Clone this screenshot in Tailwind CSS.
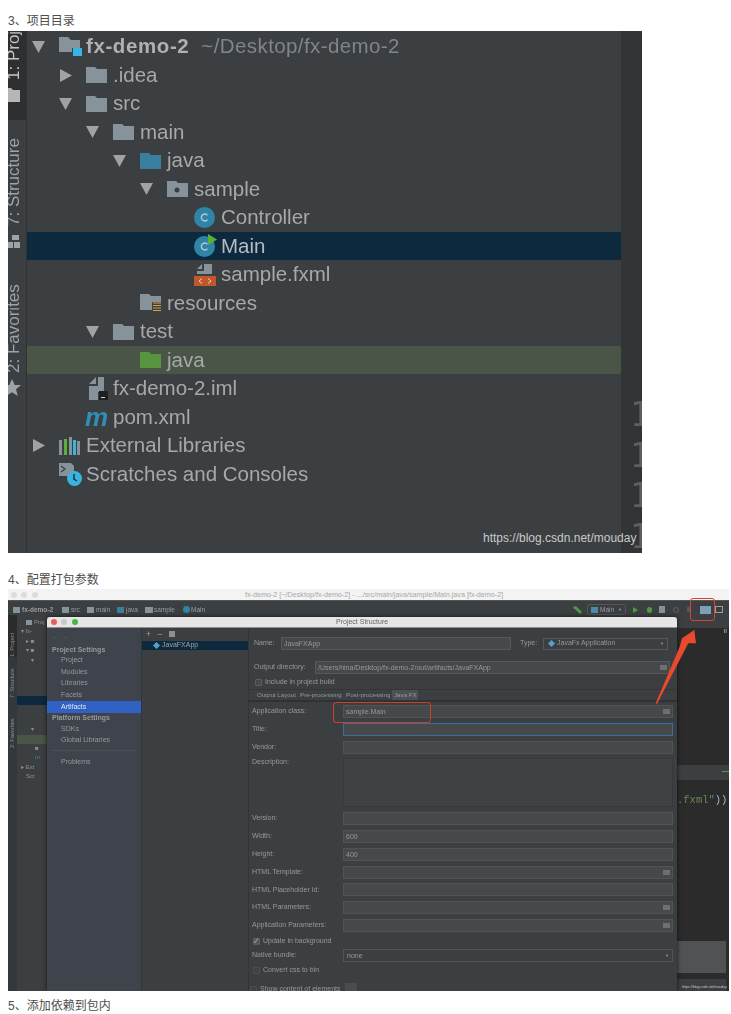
<!DOCTYPE html>
<html lang="zh">
<head>
  <meta charset="UTF-8">
  <title>项目目录</title>
  <script src="https://cdn.jsdelivr.net/npm/@tailwindcss/browser@4"></script>
</head>
<body class="bg-white font-['Liberation_Sans','Noto_Sans_CJK_SC',sans-serif] overflow-hidden h-[1014px]">
  <p class="pl-2 pt-[14px] h-[31px] text-[12px] leading-[14px] text-[#4d4d4d]">3、项目目录</p>

  <!-- project tree screenshot -->
  <div class="relative ml-2 w-[634px] h-[522px] bg-[#3c3f41] overflow-hidden flex">
    <div class="w-[19px] h-full border-r border-[#2f3133] shrink-0 relative text-[#a0a3a5] blur-[0.4px]">
      <div class="h-[89px] bg-[#2d2f30]"></div>
      <span class="absolute left-0 top-[-2px] w-[12px] h-[51px] [writing-mode:vertical-rl] rotate-180 text-[17px] leading-[12px] text-[#c4c6c7] whitespace-nowrap">1: Proj</span>
      <svg class="absolute left-0 top-[57px]" width="12" height="14" viewBox="0 0 12 14"><path d="M0 0h3l2 2h7v12H0z" fill="#b4b6b7"/></svg>
      <span class="absolute left-0 top-[105px] w-[12px] h-[90px] [writing-mode:vertical-rl] rotate-180 text-[17px] leading-[12px] whitespace-nowrap">7: Structure</span>
      <svg class="absolute left-0 top-[204px]" width="12" height="14" viewBox="0 0 12 14" fill="#a0a3a5"><rect x="4" y="0" width="7" height="5"/><rect x="0" y="7" width="5" height="6"/><rect x="6" y="7" width="6" height="6"/></svg>
      <span class="absolute left-0 top-[252px] w-[12px] h-[90px] [writing-mode:vertical-rl] rotate-180 text-[17px] leading-[12px] whitespace-nowrap">2: Favorites</span>
      <svg class="absolute left-[-6px] top-[347px]" width="20" height="20" viewBox="0 0 20 20"><path d="M10 1l2.700 6h6.300l-5 4.300 1.800 6.700-5.800-3.700-5.800 3.700 1.800-6.700-5-4.300h6.300z" fill="#a0a3a5"/></svg>
    </div>

    <div class="w-[594px] pt-px text-[20.500px] text-[#a6a9ab] shrink-0 blur-[0.4px] [&>div]:pt-[1px]">
      <div class="h-[28.500px] flex items-center pl-[5px]">
        <svg class="mr-[14px]" width="13" height="12" viewBox="0 0 13 12"><path d="M0 0h13L6.500 12z" fill="#a0a3a5"/></svg>
        <svg class="mr-[4px]" width="23" height="20" viewBox="0 0 23 20"><path d="M0 0h9l3 3h9v12H0z" fill="#87939a"/><rect x="13" y="11" width="10" height="9" fill="#3c3f41"/><rect x="14" y="11" width="9" height="8" fill="#3bb3e2"/></svg>
        <span class="font-bold text-[#afb1b3] tracking-[0.600px]">fx-demo-2</span><span class="ml-[12px] text-[#80858a] tracking-[0.400px]">~/Desktop/fx-demo-2</span>
      </div>
      <div class="h-[28.500px] flex items-center pl-[33px]">
        <svg class="mr-[14px]" width="12" height="13" viewBox="0 0 12 13"><path d="M0 0l12 6.500L0 13z" fill="#a0a3a5"/></svg>
        <svg class="mr-[6px]" width="21" height="16" viewBox="0 0 21 16"><path d="M0 0h9l2 2h10v14H0z" fill="#87939a"/></svg>
        <span>.idea</span>
      </div>
      <div class="h-[28.500px] flex items-center pl-[32px]">
        <svg class="mr-[14px]" width="13" height="12" viewBox="0 0 13 12"><path d="M0 0h13L6.500 12z" fill="#a0a3a5"/></svg>
        <svg class="mr-[6px]" width="21" height="16" viewBox="0 0 21 16"><path d="M0 0h9l2 2h10v14H0z" fill="#87939a"/></svg>
        <span>src</span>
      </div>
      <div class="h-[28.500px] flex items-center pl-[59px]">
        <svg class="mr-[14px]" width="13" height="12" viewBox="0 0 13 12"><path d="M0 0h13L6.500 12z" fill="#a0a3a5"/></svg>
        <svg class="mr-[6px]" width="21" height="16" viewBox="0 0 21 16"><path d="M0 0h9l2 2h10v14H0z" fill="#87939a"/></svg>
        <span>main</span>
      </div>
      <div class="h-[28.500px] flex items-center pl-[86px]">
        <svg class="mr-[14px]" width="13" height="12" viewBox="0 0 13 12"><path d="M0 0h13L6.500 12z" fill="#a0a3a5"/></svg>
        <svg class="mr-[6px]" width="21" height="16" viewBox="0 0 21 16"><path d="M0 0h9l2 2h10v14H0z" fill="#3a7f9f"/></svg>
        <span>java</span>
      </div>
      <div class="h-[28.500px] flex items-center pl-[113px]">
        <svg class="mr-[14px]" width="13" height="12" viewBox="0 0 13 12"><path d="M0 0h13L6.500 12z" fill="#a0a3a5"/></svg>
        <svg class="mr-[6px]" width="21" height="16" viewBox="0 0 21 16"><path d="M0 0h9l2 2h10v14H0z" fill="#87939a"/><circle cx="10" cy="9" r="2.500" fill="#3c3f41"/></svg>
        <span>sample</span>
      </div>
      <div class="h-[28.500px] flex items-center pl-[167px]">
        <svg class="mr-[6px]" width="21" height="21" viewBox="0 0 21 21"><circle cx="10.500" cy="10.500" r="10.500" fill="#2f85a8"/><path d="M13.500 8.200a3.500 3.500 0 1 0 0 4.600" fill="none" stroke="#b8c8d0" stroke-width="1.300"/></svg>
        <span>Controller</span>
      </div>
      <div class="h-[28.500px] flex items-center pl-[167px] bg-[#0d293e]">
        <svg class="mr-[6px] overflow-visible" width="21" height="21" viewBox="0 0 21 21"><circle cx="10.500" cy="10.500" r="10.500" fill="#2f85a8"/><path d="M13.500 8.200a3.500 3.500 0 1 0 0 4.600" fill="none" stroke="#b8c8d0" stroke-width="1.300"/><path d="M14-2l9 5.500-9 5.500z" fill="#5fae3a"/></svg>
        <span class="text-[#b4bcc2]">Main</span>
      </div>
      <div class="h-[28.500px] flex items-center pl-[167px]">
        <svg class="mr-[5px]" width="22" height="22" viewBox="0 0 22 22"><path d="M3 5l5-5v5zM10 0h8v10H3V7h7z" fill="#87939a"/><rect x="0" y="12" width="22" height="10" fill="#c4572a"/><path d="M8 14.500l-3 2.500 3 2.500M14 14.500l3 2.500-3 2.500" fill="none" stroke="#f0d0c0" stroke-width="1"/></svg>
        <span>sample.fxml</span>
      </div>
      <div class="h-[28.500px] flex items-center pl-[113px]">
        <svg class="mr-[6px] overflow-visible" width="21" height="18" viewBox="0 0 21 18"><path d="M0 0h9l2 2h10v14H0z" fill="#87939a"/><rect x="12" y="8" width="10" height="10" fill="#3c3f41"/><path d="M13 9h8M13 11.500h8M13 14h8M13 16.500h8" stroke="#d9a343" stroke-width="1.200"/></svg>
        <span>resources</span>
      </div>
      <div class="h-[28.500px] flex items-center pl-[59px]">
        <svg class="mr-[14px]" width="13" height="12" viewBox="0 0 13 12"><path d="M0 0h13L6.500 12z" fill="#a0a3a5"/></svg>
        <svg class="mr-[6px]" width="21" height="16" viewBox="0 0 21 16"><path d="M0 0h9l2 2h10v14H0z" fill="#87939a"/></svg>
        <span>test</span>
      </div>
      <div class="h-[28.500px] flex items-center pl-[113px] bg-[#4a5548]">
        <svg class="mr-[6px]" width="21" height="16" viewBox="0 0 21 16"><path d="M0 0h9l2 2h10v14H0z" fill="#57953f"/></svg>
        <span>java</span>
      </div>
      <div class="h-[28.500px] flex items-center pl-[62px]">
        <svg class="mr-[5px]" width="19" height="23" viewBox="0 0 19 23"><path d="M0 7l7-7v7zM9 0h6v15H9v8H0V9h9z" fill="#87939a"/><rect x="10" y="14" width="9" height="9" fill="#1f1f1f"/><rect x="12" y="20" width="4" height="1" fill="#d0d0d0"/></svg>
        <span>fx-demo-2.iml</span>
      </div>
      <div class="h-[28.500px] flex items-center pl-[58px]">
        <span class="w-[28px] italic font-bold text-[26px] leading-[20px] text-[#2f8fb5]">m</span>
        <span>pom.xml</span>
      </div>
      <div class="h-[28.500px] flex items-center pl-[6px]">
        <svg class="mr-[14px]" width="12" height="13" viewBox="0 0 12 13"><path d="M0 0l12 6.500L0 13z" fill="#a0a3a5"/></svg>
        <svg class="mr-[6px]" width="21" height="18" viewBox="0 0 21 18"><rect x="0" y="3" width="3" height="15" fill="#87939a"/><rect x="5" y="2" width="3" height="16" fill="#5fae3a"/><rect x="10" y="0" width="3" height="18" fill="#87939a"/><rect x="14" y="3" width="3" height="15" fill="#3bb3e2"/><rect x="18" y="4" width="3" height="14" fill="#87939a"/></svg>
        <span>External Libraries</span>
      </div>
      <div class="h-[28.500px] flex items-center pl-[32px]">
        <svg class="mr-[4px]" width="23" height="23" viewBox="0 0 23 23"><path d="M0 0h12l3 3v10H0z" fill="#87939a"/><path d="M2 3l4 3-4 3" fill="none" stroke="#3c3f41" stroke-width="1.200"/><circle cx="15.500" cy="15.500" r="7.500" fill="#3bb3e2"/><path d="M15 11v5l3 2" fill="none" stroke="#1d3340" stroke-width="1.500"/></svg>
        <span>Scratches and Consoles</span>
      </div>
    </div>

    <div class="flex-1 bg-[#333435] overflow-hidden pt-[364px] pl-[9px] font-['DejaVu_Sans_Mono',monospace] text-[33px] leading-[40.500px] text-[#5c6064] blur-[0.4px]">
      <div>1</div><div>1</div><div>1</div><div>1</div>
    </div>
    <span class="absolute left-[475px] top-[499px] text-[12px] leading-[16px] text-[#c8cacc] whitespace-nowrap">https://blog.csdn.net/mouday</span>
  </div>

  <p class="pl-2 mt-[20px] h-[16px] text-[12px] leading-[14px] text-[#4d4d4d]">4、配置打包参数</p>

  <!-- project structure screenshot -->
  <div class="relative ml-2 w-[721px] h-[402px] bg-[#2b2b2b] overflow-hidden">
    <div class="h-[11px] bg-[#f3f3f3] flex items-center relative">
      <span class="ml-[3px] w-[6px] h-[6px] rounded-full bg-[#dcdcdc]"></span>
      <span class="ml-[4px] w-[6px] h-[6px] rounded-full bg-[#dcdcdc]"></span>
      <span class="ml-[5px] w-[6px] h-[6px] rounded-full bg-[#dcdcdc]"></span>
      <span class="absolute left-[237px] top-0 text-[7.200px] leading-[11px] text-[#a8a8a8] whitespace-nowrap">fx-demo-2 [~/Desktop/fx-demo-2] - .../src/main/java/sample/Main.java [fx-demo-2]</span>
    </div>
    <div class="h-[18px] bg-[#3c3f41] border-t border-[#555] flex items-center pl-[5px] pr-[6px] text-[6.500px] text-[#9a9da0] whitespace-nowrap blur-[0.4px]">
      <span class="w-[7px] h-[6px] bg-[#87939a]"></span><b class="ml-[2px] w-[32px]">fx-demo-2</b>
      <span class="ml-[8px] w-[7px] h-[6px] bg-[#87939a]"></span><span class="ml-[2px] w-[9px]">src</span>
      <span class="ml-[7px] w-[7px] h-[6px] bg-[#87939a]"></span><span class="ml-[2px] w-[14px]">main</span>
      <span class="ml-[7px] w-[7px] h-[6px] bg-[#3a7f9f]"></span><span class="ml-[2px] w-[12px]">java</span>
      <span class="ml-[7px] w-[8px] h-[6px] bg-[#87939a]"></span><span class="ml-[1px] w-[21px]">sample</span>
      <span class="ml-[8px] w-[7px] h-[7px] rounded-full bg-[#2f85a8]"></span><span class="ml-[1px] w-[13px]">Main</span>
      <svg class="ml-auto" width="9" height="8" viewBox="0 0 9 8"><path d="M0 1l3-1 6 6-2 2-5-5-1 0z" fill="#4f9a45"/></svg>
      <span class="ml-[5px] w-[39px] h-[11px] border border-[#555] rounded-[2px] flex items-center gap-[2px] px-[3px]"><span class="w-[7px] h-[6px] bg-[#4c8aa8]"></span>Main<span class="ml-auto text-[4px]">▼</span></span>
      <svg class="ml-[7px]" width="5" height="6" viewBox="0 0 5 6"><path d="M0 0l5 3-5 3z" fill="#4f9a45"/></svg>
      <span class="ml-[9px] w-[5px] h-[6px] rounded-full bg-[#4f9a45]"></span>
      <span class="ml-[7px] w-[6px] h-[7px] bg-[#8b8f92]"></span>
      <span class="ml-[8px] w-[6px] h-[6px] rounded-full border border-[#5c5f62]"></span>
      <span class="ml-[8px] w-[3px] h-[5px] bg-[#55585a]"></span>
      <span class="ml-[10px] w-[11px] h-[8px] bg-[#7da0b5]"></span>
      <span class="ml-[4px] w-[8px] h-[7px] border border-[#9a9da0]"></span>
    </div>

    <!-- ide behind the dialog -->
    <div class="absolute left-0 top-[26px] bottom-0 w-[39px] bg-[#3c3f41] flex blur-[0.4px]">
      <div class="w-[9px] h-full bg-[#35383a] text-[5.700px] text-[#8f9295] shrink-0">
        <div class="h-[42px] bg-[#2b2b2b] [writing-mode:vertical-rl] rotate-180 leading-[9px] pb-[2px]">1: Project</div>
        <div class="mt-[6px] h-[35px] [writing-mode:vertical-rl] rotate-180 leading-[9px]">7: Structure</div>
        <div class="mt-[15px] h-[35px] [writing-mode:vertical-rl] rotate-180 leading-[9px]">2: Favorites</div>
      </div>
      <div class="flex-1 pl-[4px] pt-[3px] text-[6px] leading-[9.500px] text-[#8c9093] whitespace-nowrap overflow-hidden">
        <div class="h-[9px] pl-[5px] flex items-center gap-[2px]"><span class="w-[6px] h-[5px] bg-[#87939a]"></span>Proj</div>
        <div>▾ <span>fx-</span></div><div class="pl-[5px]">▸ ■</div><div class="pl-[5px]">▾ ■</div><div class="pl-[10px]">▾</div>
        <div class="h-[31px]"></div>
        <div class="h-[9px] -ml-[4px] bg-[#0d293e]"></div>
        <div class="h-[20px]"></div>
        <div class="pl-[10px]">▾</div>
        <div class="h-[9px] -ml-[4px] bg-[#4a5548]"></div>
        <div class="pl-[14px]">■</div><div class="pl-[14px] text-[#2f8fb5]">m</div>
        <div>▸ Ext</div><div class="pl-[5px]">Scr</div>
      </div>
    </div>

    <!-- editor on the right -->
    <div class="absolute left-[669px] top-[28px] bottom-0 w-[52px] bg-[#2b2b2b] blur-[0.4px]">
      <div class="h-[11px] bg-[#3c3f41]"></div>
      <div class="h-[137px] text-right pr-[2px] text-[6px] leading-[6px] text-[#c0c3c5]">II</div>
      <div class="h-[15px] bg-[#3c3f41] relative"><span class="absolute right-0 top-[6px] w-[7px] h-px bg-[#4f9a45]"></span></div>
      <p class="mt-[14px] font-['Liberation_Mono',monospace] text-[10.500px] leading-[12px] text-[#6a8759] whitespace-nowrap">.fxml"<span class="text-[#a9b7c6]">))</span></p>
      <div class="absolute left-0 right-[3px] top-[324px] h-[32px] bg-[#505254]"></div>
      <div class="absolute left-0 right-[3px] top-[362px] bottom-0 bg-[#3c3f41]"></div>
      <span class="absolute right-[2px] bottom-[1px] text-[3.500px] leading-[5px] text-[#c6c8ca] whitespace-nowrap">https://blog.csdn.net/mouday</span>
    </div>

    <!-- dialog -->
    <div class="absolute left-[39px] top-[28px] bottom-0 w-[630px] bg-[#3c3f41] shadow-[0_0_4px_#111] flex flex-col text-[7px] text-[#96999c] blur-[0.4px]">
      <div class="h-[11px] shrink-0 bg-[#e6e6e6] rounded-t-[3px] flex items-center relative border-b border-[#8f8f8f]">
        <span class="ml-[4px] w-[6px] h-[6px] rounded-full bg-[#ee5e57]"></span>
        <span class="ml-[4px] w-[6px] h-[6px] rounded-full bg-[#c9c9c9]"></span>
        <span class="ml-[5px] w-[6px] h-[6px] rounded-full bg-[#3fb94a]"></span>
        <span class="absolute left-[289px] text-[#666]">Project Structure</span>
      </div>
      <div class="flex flex-1 min-h-0">
        <div class="w-[94px] bg-[#3e434c] shrink-0 pt-[3px] leading-[11.700px]">
          <div class="pl-[5px] h-[13px] text-[#60646a]">←  →</div>
          <div class="pl-[5px] h-[10px] leading-[12px] font-bold">Project Settings</div>
          <div class="pl-[14px] h-[11.700px]">Project</div>
          <div class="pl-[14px] h-[11.700px]">Modules</div>
          <div class="pl-[14px] h-[11.700px]">Libraries</div>
          <div class="pl-[14px] h-[11.700px]">Facets</div>
          <div class="pl-[14px] h-[12px] leading-[12px] bg-[#2f62c4] text-[#dfe6f3]">Artifacts</div>
          <div class="pl-[5px] h-[10px] leading-[10px] font-bold">Platform Settings</div>
          <div class="pl-[14px] h-[11.700px]">SDKs</div>
          <div class="pl-[14px] h-[11.700px]">Global Libraries</div>
          <div class="mt-[4px] mx-[5px] border-t border-[#4b5058]"></div>
          <div class="pl-[14px] mt-[5px] leading-[11px]">Problems</div>
        </div>
        <div class="w-[108px] shrink-0 border-l border-r border-[#333537] pt-[2px]">
          <div class="h-[10px] pl-[4px] text-[9px] leading-[9px] text-[#a0a3a5] flex gap-[6px]"><span>+</span><span>−</span><span class="mt-[1px] w-[6px] h-[6px] bg-[#8c9093]"></span></div>
          <div class="h-[9px] mt-[1px] bg-[#0d293e] flex items-center pl-[11px] gap-[2px] text-[#9ca3a8]">
            <svg width="7" height="7" viewBox="0 0 7 7"><path d="M3.500 0l3.500 3.500-3.500 3.500L0 3.500z" fill="#4fa3d1"/></svg>JavaFXApp
          </div>
        </div>
        <div class="flex-1 min-w-0 pt-[9px]">
          <div class="flex items-center h-[13px] pl-[5px]">
            <span class="w-[27px] shrink-0">Name:</span>
            <span class="w-[230px] h-[13px] bg-[#45494a] border border-[#565859] pl-[2px] leading-[11px]">JavaFXApp</span>
            <span class="ml-[9px] w-[23px] shrink-0">Type:</span>
            <span class="w-[125px] h-[12px] bg-[#3c3f41] border border-[#565859] pl-[4px] flex items-center justify-between pr-[3px]"><span class="flex items-center gap-[2px]"><svg width="7" height="7" viewBox="0 0 7 7"><path d="M3.500 0l3.500 3.500-3.500 3.500L0 3.500z" fill="#4fa3d1"/></svg>JavaFx Application</span><span class="text-[4px]">▼</span></span>
          </div>
          <div class="flex items-center h-[13px] mt-[11px] pl-[5px]">
            <span class="w-[61px] shrink-0">Output directory:</span>
            <span class="w-[355px] h-[13px] bg-[#45494a] border border-[#565859] pl-[2px] leading-[11px] flex justify-between pr-[2px]"><span>/Users/hina/Desktop/fx-demo-2/out/artifacts/JavaFXApp</span><span class="mt-[3px] w-[7px] h-[5px] bg-[#6c7073]"></span></span>
          </div>
          <div class="flex items-center h-[11px] mt-[3px] pl-[6px] gap-[3px]"><span class="w-[7px] h-[7px] rounded-[1px] border border-[#5b5e60] bg-[#45494a]"></span>Include in project build</div>
          <div class="flex items-center h-[11px] mt-px border-t border-[#333537] text-[6.200px] pl-[8px] whitespace-nowrap">
            <span class="w-[43px]">Output Layout</span><span class="w-[46px]">Pre-processing</span><span class="w-[46px]">Post-processing</span><span class="pl-[2px] w-[26px] h-full leading-[10px] bg-[#4d5052]">Java FX</span>
          </div>
          <div class="h-[2px] bg-[#2f3133]"></div>
          <div class="pt-[3px] pl-[3px] pr-[4px] grid grid-cols-[91px_1fr] grid-rows-[13px_13px_13px_49px_13px_13px_13px_13px_13px_13px_13px] gap-y-[4.800px] items-center">
            <span>Application class:</span><span class="h-[13px] bg-[#45494a] border border-[#515354] pl-[2px] leading-[11px] flex justify-between pr-[2px]"><span>sample.Main</span><span class="mt-[3px] w-[7px] h-[5px] bg-[#6c7073]"></span></span>
            <span>Title:</span><span class="h-[13px] bg-[#45494a] border border-[#3d6d9e]"></span>
            <span>Vendor:</span><span class="h-[13px] bg-[#45494a] border border-[#515354]"></span>
            <span class="self-start leading-[8px]">Description:</span><span class="h-[49px] bg-[#3f4244] border border-[#38393b] self-start"></span>
            <span>Version:</span><span class="h-[13px] bg-[#45494a] border border-[#515354]"></span>
            <span>Width:</span><span class="h-[13px] bg-[#45494a] border border-[#515354] pl-[2px] leading-[11px]">600</span>
            <span>Height:</span><span class="h-[13px] bg-[#45494a] border border-[#515354] pl-[2px] leading-[11px]">400</span>
            <span>HTML Template:</span><span class="h-[13px] bg-[#45494a] border border-[#515354] flex justify-end pr-[2px]"><span class="mt-[3px] w-[7px] h-[5px] bg-[#6c7073]"></span></span>
            <span>HTML Placeholder Id:</span><span class="h-[13px] bg-[#45494a] border border-[#515354]"></span>
            <span>HTML Parameters:</span><span class="h-[13px] bg-[#45494a] border border-[#515354] flex justify-end pr-[2px]"><span class="mt-[3px] w-[7px] h-[5px] bg-[#6c7073]"></span></span>
            <span>Application Parameters:</span><span class="h-[13px] bg-[#45494a] border border-[#515354] flex justify-end pr-[2px]"><span class="mt-[3px] w-[7px] h-[5px] bg-[#6c7073]"></span></span>
          </div>
          <div class="flex items-center h-[11px] mt-[4px] pl-[4px] gap-[3px]"><span class="w-[7px] h-[7px] rounded-[1px] border border-[#5b5e60] bg-[#56595b] text-[6px] leading-[5px] text-[#c0c3c5]">✓</span>Update in background</div>
          <div class="pl-[3px] pr-[4px] mt-[2px] grid grid-cols-[91px_1fr] items-center h-[13px]">
            <span>Native bundle:</span><span class="h-[13px] bg-[#3c3f41] border border-[#515354] pl-[3px] leading-[11px] flex justify-between pr-[3px]"><span>none</span><span class="text-[4px]">▼</span></span>
          </div>
          <div class="flex items-center h-[11px] mt-[3px] pl-[4px] gap-[3px]"><span class="w-[7px] h-[7px] rounded-[1px] border border-[#4b4e50] bg-[#3f4244]"></span>Convert css to bin</div>
          <div class="flex items-center h-[11px] mt-[8px] pl-[1px] gap-[3px]"><span class="w-[7px] h-[7px] rounded-[1px] border border-[#4b4e50] bg-[#3f4244]"></span>Show content of elements<span class="ml-[1px] w-[12px] h-[12px] bg-[#4a4d4f]"></span></div>
        </div>
      </div>
    </div>

    <!-- red annotations -->
    <div class="absolute left-[325px] top-[113px] w-[98px] h-[21px] rounded-[3px] border-[1.500px] border-[#cf3f25]"></div>
    <div class="absolute left-[682px] top-[9px] w-[25px] h-[23px] rounded-[3px] border-[1.500px] border-[#d6452c]"></div>
    <svg class="absolute left-[640px] top-[30px]" width="60" height="100" viewBox="0 0 60 100"><path d="M46.300 11L48 24.300 40.300 24.300 9 85 7.700 84.300 31.700 27.700 34 19.300z" fill="#e9492c"/></svg>
  </div>

  <p class="pl-2 mt-[8px] text-[12px] leading-[14px] text-[#4d4d4d]">5、添加依赖到包内</p>
</body>
</html>
